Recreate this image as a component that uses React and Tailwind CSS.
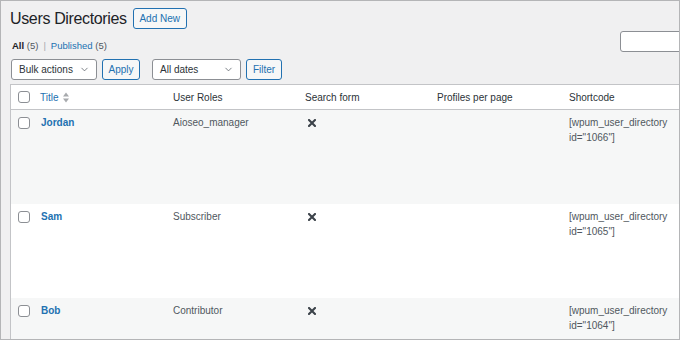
import { ChevronDown } from 'lucide-react'

const rows = [
  { id: 1066, name: 'Jordan', role: 'Aioseo_manager', bg: 'bg-[#f6f7f7]' },
  { id: 1065, name: 'Sam', role: 'Subscriber', bg: 'bg-white' },
  { id: 1064, name: 'Bob', role: 'Contributor', bg: 'bg-[#f6f7f7]' },
]

const cols = 'grid grid-cols-[22px_132px_132px_132px_132px_1fr]'

function Checkbox() {
  return <span className="ml-[7px] block w-[12px] h-[12px] rounded-[3px] border border-[#8c8f94] bg-white" />
}

function Select({ label, width }) {
  return (
    <div className={`${width} h-[21px] flex items-center justify-between pl-[7px] pr-[6px] bg-white border border-[#8c8f94] rounded-[3px] text-[10px] text-[#2c3338]`}>
      <span>{label}</span>
      <ChevronDown size={11} strokeWidth={1.6} className="text-[#50575e]" />
    </div>
  )
}

function Button({ children, className = '' }) {
  return (
    <span className={`h-[21px] flex items-center justify-center border border-[#2271b1] rounded-[3px] bg-[#f6f7f7] text-[10px] text-[#2271b1] ${className}`}>
      {children}
    </span>
  )
}

export default function App() {
  return (
    <div className="w-[680px] h-[340px] border border-[#b4b5b7] bg-[#f0f0f1] overflow-hidden" style={{ fontFamily: '"Liberation Sans", Arial, sans-serif' }}>
      <div className="w-[740px] pl-[9px] pt-[7px]">
        {/* heading */}
        <div className="flex items-center gap-[6px]">
          <h1 className="text-[16px] tracking-[-0.35px] text-[#1d2327] leading-none">Users Directories</h1>
          <Button className="w-[54px]">Add New</Button>
        </div>

        {/* views + search */}
        <div className="mt-[2px] flex items-end justify-between">
          <p className="text-[9.5px] leading-[13px] text-[#50575e] pl-[2px]">
            <span className="font-bold text-[#1d2327]">All</span> (5)
            <span className="mx-[5px] text-[#a7aaad]">|</span>
            <span className="text-[#2271b1]">Published</span> (5)
          </p>
          <div className="w-[121px] h-[21px] bg-white border border-[#8c8f94] rounded-[3px]" />
        </div>

        {/* tablenav */}
        <div className="mt-[7px] flex items-center">
          <Select label="Bulk actions" width="w-[86px] ml-[1px]" />
          <Button className="w-[38px] ml-[5px]">Apply</Button>
          <Select label="All dates" width="w-[89px] ml-[12px]" />
          <Button className="w-[36px] ml-[5px]">Filter</Button>
        </div>

        {/* table */}
        <div className="mt-[4px] border border-[#c3c4c7] bg-white text-[10px]">
          <div className={`${cols} h-[25px] items-center border-b border-[#c3c4c7] text-[#2c3338]`}>
            <Checkbox />
            <div className="pl-[7px] flex items-center gap-[4px] text-[#2271b1]">
              Title
              <svg width="6" height="11" viewBox="0 0 6 11" fill="#a7aaad">
                <path d="M3 0.5 L6 4.5 L0 4.5 Z" />
                <path d="M0 6.5 L6 6.5 L3 10.5 Z" />
              </svg>
            </div>
            <div className="pl-[8px]">User Roles</div>
            <div className="pl-[8px]">Search form</div>
            <div className="pl-[8px]">Profiles per page</div>
            <div className="pl-[8px]">Shortcode</div>
          </div>

          {rows.map(r => (
            <div key={r.id} className={`${cols} h-[94px] items-start pt-[5px] leading-[15px] ${r.bg}`}>
              <div className="pt-[2px]"><Checkbox /></div>
              <div className="pl-[8px] font-bold text-[#2271b1]">{r.name}</div>
              <div className="pl-[8px] text-[#50575e]">{r.role}</div>
              <div className="pl-[11px] pt-[3.5px]">
                <svg width="8" height="8" viewBox="0 0 8 8">
                  <path d="M1 1 L7 7 M7 1 L1 7" stroke="#3c434a" strokeWidth="2.1" strokeLinecap="square" />
                </svg>
              </div>
              <div />
              <div className="pl-[8px] text-[#50575e] w-[115px]">
                <span className="block">[wpum_user_directory</span>
                <span className="block">id="{r.id}"]</span>
              </div>
            </div>
          ))}
        </div>
      </div>
    </div>
  )
}
